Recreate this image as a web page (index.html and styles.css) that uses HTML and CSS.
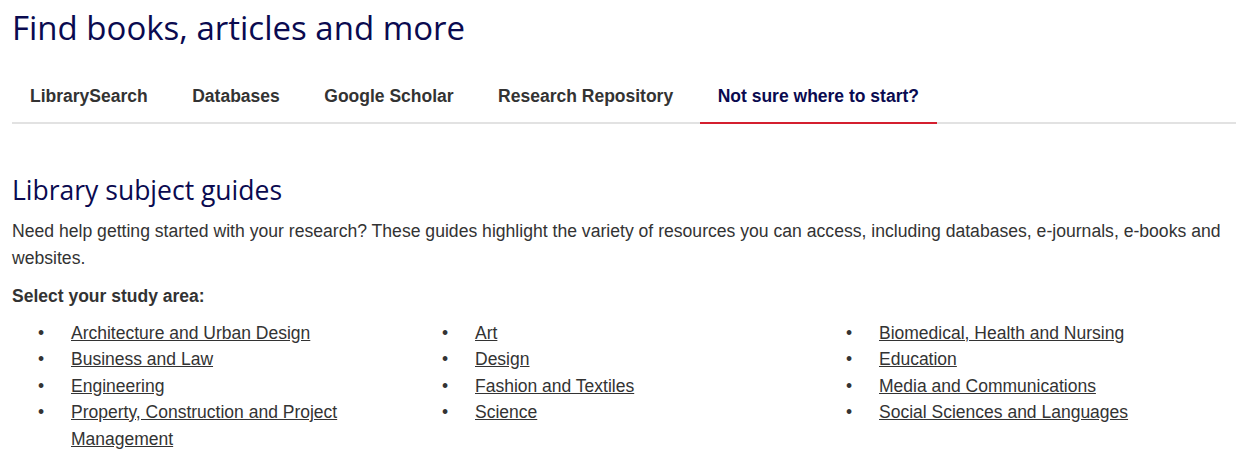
FILE: index.html
```
<!DOCTYPE html>
<html lang="en">
<head>
<meta charset="utf-8">
<title>Find books, articles and more</title>
<link rel="stylesheet" href="styles.css">
</head>
<body>
<main class="page">
  <h1 class="title">Find books, articles and more</h1>
  <nav class="tabs">
    <a class="tab" href="#">LibrarySearch</a>
    <a class="tab" href="#">Databases</a>
    <a class="tab" href="#">Google Scholar</a>
    <a class="tab" href="#">Research Repository</a>
    <a class="tab tab-active" href="#">Not sure where to start?</a>
  </nav>
  <section class="panel">
    <h2 class="subtitle">Library subject guides</h2>
    <p class="intro">Need help getting started with your research? These guides highlight the variety of resources you can access, including databases, e-journals, e-books and websites.</p>
    <p class="select">Select your study area:</p>
    <div class="columns">
      <ul class="list">
        <li><a href="#">Architecture and Urban Design</a></li>
        <li><a href="#">Business and Law</a></li>
        <li><a href="#">Engineering</a></li>
        <li><a href="#">Property, Construction and Project Management</a></li>
      </ul>
      <ul class="list">
        <li><a href="#">Art</a></li>
        <li><a href="#">Design</a></li>
        <li><a href="#">Fashion and Textiles</a></li>
        <li><a href="#">Science</a></li>
      </ul>
      <ul class="list">
        <li><a href="#">Biomedical, Health and Nursing</a></li>
        <li><a href="#">Education</a></li>
        <li><a href="#">Media and Communications</a></li>
        <li><a href="#">Social Sciences and Languages</a></li>
      </ul>
    </div>
  </section>
</main>
</body>
</html>
```
FILE: styles.css
```
html, body {
  margin: 0;
  padding: 0;
  background: #fff;
}
body {
  font-family: "Liberation Sans", Arial, sans-serif;
  color: #333;
}
.page {
  padding: 0 0 0 12px;
}
.title {
  margin: 0;
  padding-top: 8px;
  font-family: "Open Sans", sans-serif;
  font-weight: 400;
  font-size: 33px;
  line-height: 40px;
  color: #0a0a50;
}
.tabs {
  display: flex;
  gap: 8.5px;
  margin-top: 36px;
  border-bottom: 2px solid #e2e2e2;
}
.tab {
  display: block;
  padding: 0 18px;
  height: 38px;
  line-height: 24px;
  margin-bottom: -2px;
  border-bottom: 2px solid transparent;
  font-weight: 700;
  font-size: 17.5px;
  color: #333;
  text-decoration: none;
}
.tab-active {
  color: #0a0a50;
  border-bottom-color: #d41f2f;
}
.panel {
  padding-right: 12px;
}
.subtitle {
  margin: 51px 0 0;
  font-family: "Open Sans", sans-serif;
  font-weight: 400;
  font-size: 26.5px;
  line-height: 30px;
  color: #0a0a50;
}
.intro {
  margin: 13px 0 0;
  font-size: 17.6px;
  line-height: 26.5px;
}
.select {
  margin: 12px 0 0;
  font-weight: 700;
  font-size: 17.5px;
  line-height: 26.5px;
}
.columns {
  display: grid;
  grid-template-columns: repeat(3, 1fr);
  margin-top: 10px;
}
.list {
  margin: 0;
  padding-left: 26px;
  list-style: none;
  font-size: 17.5px;
  line-height: 26.5px;
}
.list li {
  display: flex;
}
.list li::before {
  content: "\2022";
  flex: none;
  width: 33px;
}
.list a {
  color: #333;
  text-decoration: underline;
}
```
